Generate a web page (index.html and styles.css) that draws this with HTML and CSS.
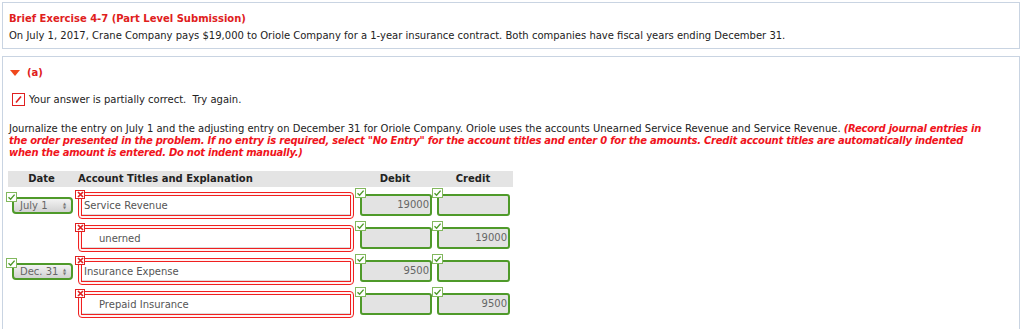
FILE: index.html
```html
<!DOCTYPE html>
<html lang="en">
<head>
    <meta charset="UTF-8">
    <title>Brief Exercise 4-7</title>
    <link rel="stylesheet" href="styles.css">
</head>
<body>
    <div class="page">
        <!-- Question statement -->
        <div class="panel intro">
            <h1 class="title">Brief Exercise 4-7 (Part Level Submission)</h1>
            <p class="statement">On July 1, 2017, Crane Company pays $19,000 to Oriole Company for a 1-year insurance contract. Both companies have fiscal years ending December 31.</p>
        </div>

        <!-- Part (a) -->
        <div class="panel part">
            <div class="part-head"><span class="caret"></span>(a)</div>

            <div class="feedback">
                <svg class="fb-icon" width="13" height="13" viewBox="0 0 13 13">
                    <rect x="0.5" y="0.5" width="12" height="12" fill="#fff" stroke="#e02020"/>
                    <path d="M4 9.5 L9 3.5" stroke="#e02020" stroke-width="1.6"/>
                </svg>
                Your answer is partially correct.&nbsp; Try again.
            </div>

            <p class="instructions">Journalize the entry on July 1 and the adjusting entry on December 31 for Oriole Company. Oriole uses the accounts Unearned Service Revenue and Service Revenue. <em class="note">(Record journal entries in the order presented in the problem. If no entry is required, select "No Entry" for the account titles and enter 0 for the amounts. Credit account titles are automatically indented when the amount is entered. Do not indent manually.)</em></p>

            <div class="journal">
                <div class="j-head">
                    <div class="col-date">Date</div>
                    <div class="col-account">Account Titles and Explanation</div>
                    <div class="col-debit">Debit</div>
                    <div class="col-credit">Credit</div>
                </div>

                <div id="rows"></div>
            </div>
        </div>
    </div>

    <script>
        // Journal entries as answered
        const entries = [
            { date: "July 1", account: "Service Revenue", debit: "19000", credit: "" },
            { date: "", account: "unerned", debit: "", credit: "19000", indent: true },
            { date: "Dec. 31", account: "Insurance Expense", debit: "9500", credit: "" },
            { date: "", account: "Prepaid Insurance", debit: "", credit: "9500", indent: true }
        ];

        const check = '<span class="mark ok"><svg width="9" height="8" viewBox="0 0 9 8"><path d="M1.5 4.2 L3.6 6.2 L7.6 1.6" fill="none" stroke="#4f9a2a" stroke-width="1.4"/></svg></span>';
        const cross = '<span class="mark bad"><svg width="7" height="7" viewBox="0 0 7 7"><path d="M1 1 L6 6 M6 1 L1 6" stroke="#e02020" stroke-width="1.7"/></svg></span>';

        function renderRows() {
            const rows = document.getElementById("rows");
            entries.forEach(e => {
                const row = document.createElement("div");
                row.classList.add("j-row");

                let dateCell = '<div class="col-date"></div>';
                if (e.date) {
                    dateCell = `<div class="col-date">${check}<div class="date-select"><span>${e.date}</span><span class="arrows">&#9650;<br>&#9660;</span></div></div>`;
                }

                row.innerHTML = `
                    ${dateCell}
                    <div class="col-account">${cross}<div class="acct-field"><div class="acct-input${e.indent ? ' indent' : ''}">${e.account}</div></div></div>
                    <div class="col-debit">${check}<div class="amount">${e.debit}</div></div>
                    <div class="col-credit">${check}<div class="amount">${e.credit}</div></div>
                `;
                rows.appendChild(row);
            });
        }

        renderRows();
    </script>
</body>
</html>
```

FILE: styles.css
```css
* {
    margin: 0;
    padding: 0;
    box-sizing: border-box;
}

body {
    font-family: "DejaVu Sans", Verdana, sans-serif;
    font-size: 10px;
    color: #222;
    background: #fff;
}

.page {
    padding: 2px 4px 0 2px;
}

.panel {
    border: 1px solid #c9d4e2;
    background: #fff;
}

/* Question statement */
.intro {
    height: 47px;
    padding: 10px 6px 0 6px;
}

.title {
    font-size: 10px;
    font-weight: bold;
    color: #e0201c;
    line-height: 12px;
}

.statement {
    margin-top: 5px;
    line-height: 12px;
}

/* Part (a) */
.part {
    margin-top: 7px;
    border-bottom: none;
    height: 280px;
    padding: 10px 6px 0 6px;
}

.part-head {
    display: flex;
    align-items: center;
    font-weight: bold;
    color: #e0201c;
    line-height: 12px;
}

.caret {
    width: 0;
    height: 0;
    border-left: 5px solid transparent;
    border-right: 5px solid transparent;
    border-top: 6px solid #f0481c;
    margin: 0 7px 0 1px;
}

.feedback {
    display: flex;
    align-items: center;
    margin-top: 14px;
    padding-left: 3px;
    line-height: 13px;
}

.fb-icon {
    margin-right: 4px;
}

.instructions {
    margin-top: 17px;
    line-height: 12px;
    padding-right: 25px;
}

.note {
    color: #f0141c;
    font-weight: bold;
    font-style: italic;
    letter-spacing: -0.25px;
}

/* Journal table */
.journal {
    margin: 12px 0 0 -3px;
    width: 506px;
}

.j-head {
    display: flex;
    background: #e4e4e4;
    height: 16px;
    line-height: 16px;
    font-weight: bold;
    margin-left: 2px;
    width: 505px;
}

.j-head .col-date {
    width: 67px;
    text-align: center;
}

.j-head .col-account {
    padding-left: 3px;
}

.j-head .col-debit,
.j-head .col-credit {
    text-align: center;
}

.col-date {
    width: 69px;
    position: relative;
}

.col-account {
    width: 281px;
    position: relative;
}

.col-debit,
.col-credit {
    width: 78px;
    position: relative;
}

.j-row {
    display: flex;
    height: 33px;
}

#rows {
    margin-top: 5px;
}

/* Status marks */
.mark {
    position: absolute;
    display: flex;
    align-items: center;
    justify-content: center;
    background: #fff;
    z-index: 1;
}

.mark.ok {
    width: 11px;
    height: 10px;
    border: 1px solid #82b85e;
    top: -4px;
    left: -1px;
}

.col-date .mark.ok {
    top: 0;
    left: 0;
}

.mark.bad {
    width: 10px;
    height: 9px;
    border: 1px solid #e02020;
    top: -2px;
    left: 0;
}

/* Date select */
.date-select {
    margin: 5px 0 0 6px;
    width: 61px;
    height: 17px;
    border: 2px solid #4f9a2a;
    border-radius: 4px;
    background: linear-gradient(#f2f2f2, #d2d2d2);
    display: flex;
    justify-content: space-between;
    align-items: center;
    padding: 0 5px 0 6px;
    color: #666;
}

.arrows {
    font-size: 4px;
    line-height: 4px;
    color: #777;
}

/* Account field */
.acct-field {
    margin-left: 3px;
    width: 276px;
    height: 27px;
    border: 1px solid #f02020;
    border-radius: 4px;
    padding: 2px;
    background: #fff2f2;
}

.acct-input {
    height: 21px;
    border: 1px solid #f02020;
    background: #fff;
    box-shadow: inset 0 -1px 0 #ddd;
    line-height: 19px;
    padding-left: 2px;
    color: #555;
}

.acct-input.indent {
    padding-left: 17px;
}

/* Amount fields */
.amount {
    margin: 2px 0 0 4px;
    width: 72px;
    height: 22px;
    border: 2px solid #4f9a2a;
    border-radius: 3px;
    background: #e3e3e3;
    text-align: right;
    line-height: 18px;
    padding-right: 1px;
    color: #666;
}

.col-credit .amount {
    margin-left: 3px;
    width: 73px;
}

.col-credit .mark.ok {
    left: -2px;
}
```
